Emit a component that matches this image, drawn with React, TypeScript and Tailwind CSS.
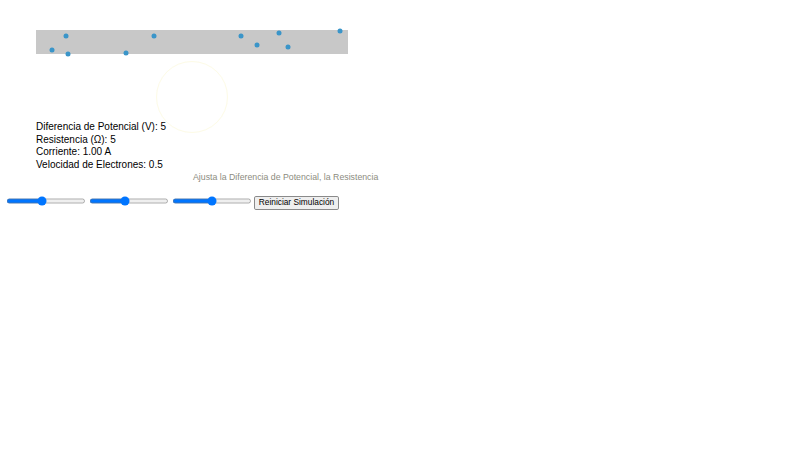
import { useState } from "react";

const electrons = [
  { x: 30, y: 6 },
  { x: 16, y: 20 },
  { x: 32, y: 24 },
  { x: 90, y: 23 },
  { x: 118, y: 6 },
  { x: 205, y: 6 },
  { x: 221, y: 15 },
  { x: 243, y: 3 },
  { x: 252, y: 17 },
  { x: 304, y: 1 },
];

export default function App() {
  const [voltage, setVoltage] = useState(5);
  const [resistance, setResistance] = useState(5);
  const [speed, setSpeed] = useState(0.5);

  const current = voltage / resistance;

  const reset = () => {
    setVoltage(5);
    setResistance(5);
    setSpeed(0.5);
  };

  return (
    <div className="relative min-h-[450px] w-[800px] bg-white font-['Liberation_Sans',Arial,sans-serif] text-black">
      {/* wire */}
      <div className="pl-[36px] pt-[30px]">
        <div className="relative h-[24px] w-[312px] bg-[#c8c8c8]">
          {electrons.map((e, i) => (
            <span
              key={i}
              className="absolute h-[5px] w-[5px] -translate-x-1/2 -translate-y-1/2 rounded-full bg-[#3a95c9]"
              style={{ left: e.x, top: e.y }}
            />
          ))}
        </div>
      </div>

      {/* bulb */}
      <div className="absolute left-[156px] top-[61px] h-[72px] w-[72px] rounded-full border-[1.5px] border-[#fdfbe6]" />

      {/* readouts */}
      <div className="mt-[67px] pl-[36px] text-[10px] leading-[12.7px]">
        <div>Diferencia de Potencial (V): {voltage}</div>
        <div>Resistencia (Ω): {resistance}</div>
        <div>Corriente: {current.toFixed(2)} A</div>
        <div>Velocidad de Electrones: {speed}</div>
      </div>

      <div className="-mt-[1px] pl-[193px] text-[8.75px] leading-[12px] text-[#8c8c80]">
        Ajusta la Diferencia de Potencial, la Resistencia
      </div>

      {/* controls */}
      <div className="mt-[13px]">
        <div className="flex items-start gap-[4.8px] pl-[9.6px] [zoom:0.625]">
          <input
            type="range"
            min={1}
            max={10}
            value={voltage}
            onChange={(ev) => setVoltage(Number(ev.target.value))}
            className="m-0 h-[16px] w-[128px]"
          />
          <input
            type="range"
            min={1}
            max={10}
            value={resistance}
            onChange={(ev) => setResistance(Number(ev.target.value))}
            className="m-0 h-[16px] w-[128px]"
          />
          <input
            type="range"
            min={0}
            max={1}
            step={0.1}
            value={speed}
            onChange={(ev) => setSpeed(Number(ev.target.value))}
            className="m-0 h-[16px] w-[128px]"
          />
          <button
            onClick={reset}
            className="ml-[-1.6px] h-[23px] rounded-[3px] border-2 border-[#8a8a8a] bg-[#efefef] px-[6px] text-[13.33px] leading-[15px] text-black"
          >
            Reiniciar Simulación
          </button>
        </div>
      </div>
    </div>
  );
}
